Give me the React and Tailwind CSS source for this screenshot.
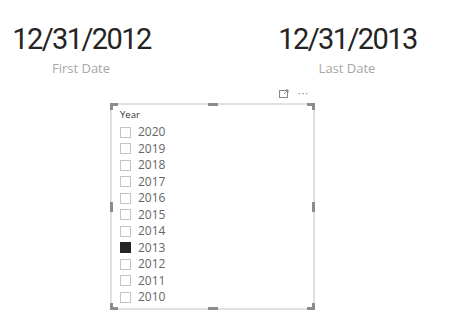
import React from "react";

const years = ["2020","2019","2018","2017","2016","2015","2014","2013","2012","2011","2010"];

function Card({ value, label, className }) {
  return (
    <div className={"flex flex-col items-center w-[162px] " + className}>
      <div className="text-[29px] leading-[34px] text-[#252423] tracking-[-1.6px] pl-[1px]" style={{ fontFamily: "Roboto, sans-serif" }}>{value}</div>
      <div className="mt-[3px] text-[13px] leading-[18px] text-[#a6a6a6]" style={{ fontFamily: "'Open Sans', sans-serif" }}>{label}</div>
    </div>
  );
}

function Handle({ className }) {
  return <div className={"absolute bg-[#8c8c8c] " + className} />;
}

export default function App() {
  return (
    <div className="w-[474px] h-[330px] bg-white overflow-hidden" style={{ fontFamily: "'Open Sans', sans-serif" }}>
      <div className="flex pt-[22px]">
        <Card value="12/31/2012" label="First Date" className="" />
        <Card value="12/31/2013" label="Last Date" className="ml-[104px]" />
      </div>
      <div className="ml-[110px] w-[205px] mt-[9px]">
        <div className="flex justify-end items-center h-[15px] pr-[6px] gap-[9px]">
          <svg width="10" height="9" viewBox="0 0 10 9" className="text-[#8a8a8a]">
            <rect x="0.5" y="1.5" width="8" height="7" fill="none" stroke="currentColor" strokeWidth="1" />
            <path d="M5 5 L9 1 M6.5 1 H9 V3.5" fill="none" stroke="currentColor" strokeWidth="1" />
          </svg>
          <span className="text-[10px] leading-none text-[#777] tracking-[1px] -mt-[2px]">···</span>
        </div>
        <div className="relative mt-[2px] h-[207px] border-2 border-[#e1e1e1] pl-[8px] pt-[4px]">
          <Handle className="-left-[2px] -top-[2px] w-[8px] h-[3px]" />
          <Handle className="-left-[2px] -top-[2px] w-[3px] h-[7px]" />
          <Handle className="-right-[2px] -top-[2px] w-[8px] h-[3px]" />
          <Handle className="-right-[2px] -top-[2px] w-[3px] h-[7px]" />
          <Handle className="-left-[2px] -bottom-[2px] w-[8px] h-[3px]" />
          <Handle className="-left-[2px] -bottom-[2px] w-[3px] h-[7px]" />
          <Handle className="-right-[2px] -bottom-[2px] w-[8px] h-[3px]" />
          <Handle className="-right-[2px] -bottom-[2px] w-[3px] h-[7px]" />
          <Handle className="left-[96px] -top-[2px] w-[10px] h-[3px]" />
          <Handle className="left-[96px] -bottom-[2px] w-[10px] h-[3px]" />
          <Handle className="-left-[2px] top-[97px] w-[3px] h-[10px]" />
          <Handle className="-right-[2px] top-[97px] w-[3px] h-[10px]" />

          <div className="text-[9.5px] leading-[12px] text-[#333]">Year</div>
          <div className="flex flex-col mt-[3px]">
            {years.map((y) => (
              <div key={y} className="flex items-center h-[16.5px]">
                <div className={"w-[11px] h-[11px] border " + (y === "2013" ? "bg-[#252525] border-[#252525]" : "border-[#c4c4c4] bg-white")} />
                <span className="ml-[7px] text-[12px] leading-[16px] text-[#666]">{y}</span>
              </div>
            ))}
          </div>
        </div>
      </div>
    </div>
  );
}
